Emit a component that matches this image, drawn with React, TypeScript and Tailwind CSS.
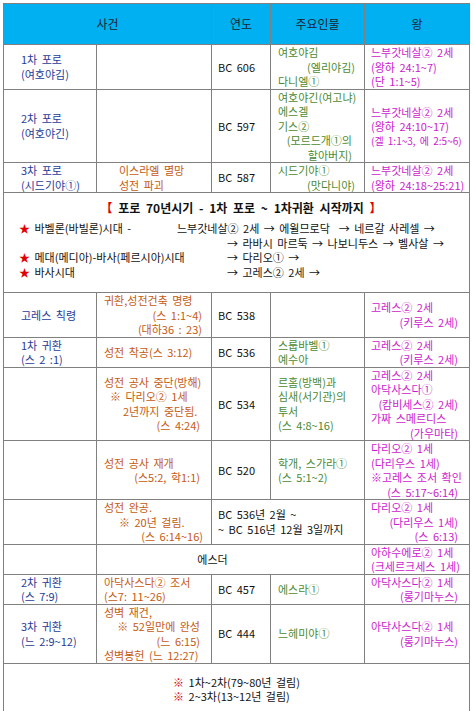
import React from "react";

const blue = "text-[#1f3c99]";
const orange = "text-[#c55a11]";
const green = "text-[#4b8a32]";
const pink = "text-[#cc1acc]";

function L({ children, className = "" }: { children: React.ReactNode; className?: string }) {
  return <div className={"text-left whitespace-nowrap " + className}>{children}</div>;
}

function R({ children, className = "" }: { children: React.ReactNode; className?: string }) {
  return <div className={"text-right whitespace-nowrap " + className}>{children}</div>;
}

const td = "border border-[#808080] align-middle p-0";

export default function App() {
  return (
    <div className="w-[474px] h-[711px] bg-white pt-[3px] pl-[3px] font-['Noto_Sans_CJK_KR',sans-serif] text-[11px] leading-[14.5px] [word-spacing:2px] text-[#111]">
      <table className="table-fixed border-collapse w-[466px]">
        <colgroup>
          <col className="w-[93px]" />
          <col className="w-[115px]" />
          <col className="w-[59px]" />
          <col className="w-[94px]" />
          <col className="w-[105px]" />
        </colgroup>
        <tbody>
          <tr className="h-[41px] bg-[#00b0f0] text-[12px] text-[#1a2433]">
            <td colSpan={2} className={td + " text-center"}>사건</td>
            <td className={td + " text-center"}>연도</td>
            <td className={td + " text-center"}>주요인물</td>
            <td className={td + " text-center"}>왕</td>
          </tr>

          <tr className="h-[44px]">
            <td className={td + " pl-[17px] " + blue}>
              <L>1차 포로</L>
              <L>(여호야김)</L>
            </td>
            <td className={td}></td>
            <td className={td + " pl-[6px]"}>BC 606</td>
            <td className={td + " pl-[7px] pr-[9px] " + green}>
              <L>여호야김</L>
              <R>(엘리야김)</R>
              <L>다니엘①</L>
            </td>
            <td className={td + " pl-[6px] " + pink}>
              <L>느부갓네살② 2세</L>
              <L>(왕하 24:1~7)</L>
              <L>(단 1:1~5)</L>
            </td>
          </tr>

          <tr className="h-[72px]">
            <td className={td + " pl-[17px] " + blue}>
              <L>2차 포로</L>
              <L>(여호야긴)</L>
            </td>
            <td className={td}></td>
            <td className={td + " pl-[6px]"}>BC 597</td>
            <td className={td + " pl-[7px] pr-[12px] " + green}>
              <L>여호야긴(여고냐)</L>
              <L>에스겔</L>
              <L>기스②</L>
              <R>(모르드개①의</R>
              <R>할아버지)</R>
            </td>
            <td className={td + " pl-[6px] " + pink}>
              <L>느부갓네살② 2세</L>
              <L>(왕하 24:10~17)</L>
              <L className="text-[10px] leading-[13px]">(겔 1:1~3, 에 2:5~6)</L>
            </td>
          </tr>

          <tr className="h-[29px]">
            <td className={td + " pl-[17px] " + blue}>
              <L>3차 포로</L>
              <L>(시드기야①)</L>
            </td>
            <td className={td + " pl-[22px] " + orange}>
              <L>이스라엘 멸망</L>
              <L>성전 파괴</L>
            </td>
            <td className={td + " pl-[6px]"}>BC 587</td>
            <td className={td + " pl-[7px] pr-[9px] " + green}>
              <L>시드기야①</L>
              <R>(맛다니야)</R>
            </td>
            <td className={td + " pl-[6px] " + pink}>
              <L>느부갓네살② 2세</L>
              <L>(왕하 24:18~25:21)</L>
            </td>
          </tr>

          <tr className="h-[100px]">
            <td colSpan={5} className={td + " pl-[15px] pb-[6px]"}>
              <div className="text-center font-bold text-[12px] leading-[16px] mb-[5px] pr-[6px] [word-spacing:3px]">
                <span className="text-[#e00000]">【</span> 포로 70년시기 - 1차 포로 ~ 1차귀환 시작까지 <span className="text-[#e00000]">】</span>
              </div>
              <div className="flex">
                <span className="w-[158px] whitespace-nowrap">
                  <span className="text-[#e00000]">★</span> 바벨론(바빌론)시대 -
                </span>
                <span className="whitespace-nowrap">느부갓네살② 2세 → 에윌므로닥 &nbsp;→ 네르갈 사레셀 →</span>
              </div>
              <div className="flex">
                <span className="w-[208px]"></span>
                <span className="whitespace-nowrap">→ 라바시 마르둑 → 나보니두스 → 벨사살 →</span>
              </div>
              <div className="flex">
                <span className="w-[208px] whitespace-nowrap">
                  <span className="text-[#e00000]">★</span> 메대(메디아)-바사(페르시아)시대
                </span>
                <span className="whitespace-nowrap">→ 다리오① →</span>
              </div>
              <div className="flex">
                <span className="w-[208px] whitespace-nowrap">
                  <span className="text-[#e00000]">★</span> 바사시대
                </span>
                <span className="whitespace-nowrap">→ 고레스② 2세 →</span>
              </div>
            </td>
          </tr>

          <tr className="h-[44px]">
            <td className={td + " pl-[17px] " + blue}>
              <L>고레스 칙령</L>
            </td>
            <td className={td + " pl-[7px] pr-[9px] " + orange}>
              <L>귀환,성전건축 명령</L>
              <R>(스 1:1~4)</R>
              <R>(대하36 : 23)</R>
            </td>
            <td className={td + " pl-[6px]"}>BC 538</td>
            <td className={td}></td>
            <td className={td + " pl-[6px] pr-[11px] " + pink}>
              <L>고레스② 2세</L>
              <R>(키루스 2세)</R>
            </td>
          </tr>

          <tr className="h-[30px]">
            <td className={td + " pl-[17px] " + blue}>
              <L>1차 귀환</L>
              <L>(스 2 :1)</L>
            </td>
            <td className={td + " pl-[7px] " + orange}>
              <L>성전 착공(스 3:12)</L>
            </td>
            <td className={td + " pl-[6px]"}>BC 536</td>
            <td className={td + " pl-[7px] " + green}>
              <L>스룹바벨①</L>
              <L>예수아</L>
            </td>
            <td className={td + " pl-[6px] pr-[11px] " + pink}>
              <L>고레스② 2세</L>
              <R>(키루스 2세)</R>
            </td>
          </tr>

          <tr className="h-[73px]">
            <td className={td}></td>
            <td className={td + " pl-[7px] pr-[11px] " + orange}>
              <L>성전 공사 중단(방해)</L>
              <L className="pl-[6px]">※ 다리오② 1세</L>
              <L className="pl-[19px]">2년까지 중단됨.</L>
              <R>(스 4:24)</R>
            </td>
            <td className={td + " pl-[6px]"}>BC 534</td>
            <td className={td + " pl-[7px] " + green}>
              <L>르홈(방백)과</L>
              <L>심새(서기관)의</L>
              <L>투서</L>
              <L>(스 4:8~16)</L>
            </td>
            <td className={td + " pl-[6px] pr-[11px] " + pink}>
              <L>고레스② 2세</L>
              <L>아닥사스다①</L>
              <R>(캄비세스② 2세)</R>
              <L>가짜 스메르디스</L>
              <R>(가우마타)</R>
            </td>
          </tr>

          <tr className="h-[57px]">
            <td className={td}></td>
            <td className={td + " pl-[7px] pr-[11px] " + orange}>
              <L>성전 공사 재개</L>
              <R>(스5:2, 학1:1)</R>
            </td>
            <td className={td + " pl-[6px]"}>BC 520</td>
            <td className={td + " pl-[7px] " + green}>
              <L>학개, 스가라①</L>
              <L>(스 5:1~2)</L>
            </td>
            <td className={td + " pl-[6px] pr-[11px] " + pink}>
              <L>다리오② 1세</L>
              <L>(다리우스 1세)</L>
              <L>※고레스 조서 확인</L>
              <R>(스 5:17~6:14)</R>
            </td>
          </tr>

          <tr className="h-[44px]">
            <td className={td}></td>
            <td className={td + " pl-[7px] pr-[8px] " + orange}>
              <L>성전 완공.</L>
              <L className="pl-[15px]">※ 20년 걸림.</L>
              <R>(스 6:14~16)</R>
            </td>
            <td colSpan={2} className={td + " pl-[6px]"}>
              <L>BC 536년 2월 ~</L>
              <L>~ BC 516년 12월 3일까지</L>
            </td>
            <td className={td + " pl-[6px] pr-[11px] " + pink}>
              <L>다리오② 1세</L>
              <R>(다리우스 1세)</R>
              <R>(스 6:13)</R>
            </td>
          </tr>

          <tr className="h-[30px]">
            <td className={td}></td>
            <td colSpan={3} className={td + " text-center pr-[36px]"}>에스더</td>
            <td className={td + " pl-[6px] " + pink}>
              <L>아하수에로② 1세</L>
              <L>(크세르크세스 1세)</L>
            </td>
          </tr>

          <tr className="h-[30px]">
            <td className={td + " pl-[17px] " + blue}>
              <L>2차 귀환</L>
              <L>(스 7:9)</L>
            </td>
            <td className={td + " pl-[7px] " + orange}>
              <L>아닥사스다② 조서</L>
              <L>(스7: 11~26)</L>
            </td>
            <td className={td + " pl-[6px]"}>BC 457</td>
            <td className={td + " pl-[7px] " + green}>
              <L>에스라①</L>
            </td>
            <td className={td + " pl-[6px] pr-[11px] " + pink}>
              <L>아닥사스다② 1세</L>
              <R>(롱기마누스)</R>
            </td>
          </tr>

          <tr className="h-[57px]">
            <td className={td + " pl-[17px] " + blue}>
              <L>3차 귀환</L>
              <L>(느 2:9~12)</L>
            </td>
            <td className={td + " pl-[7px] pr-[11px] " + orange}>
              <L>성벽 재건,</L>
              <R>※ 52일만에 완성</R>
              <R>(느 6:15)</R>
              <L>성벽봉헌 (느 12:27)</L>
            </td>
            <td className={td + " pl-[6px]"}>BC 444</td>
            <td className={td + " pl-[7px] " + green}>
              <L>느헤미야①</L>
            </td>
            <td className={td + " pl-[6px] pr-[11px] " + pink}>
              <L>아닥사스다② 1세</L>
              <R>(롱기마누스)</R>
            </td>
          </tr>

          <tr className="h-[52px]">
            <td colSpan={5} className={td + " text-center"}>
              <div className="inline-block text-left">
                <div>
                  <span className="text-[#e00000]">※</span> 1차~2차(79~80년 걸림)
                </div>
                <div>
                  <span className="text-[#e00000]">※</span> 2~3차(13~12년 걸림)
                </div>
              </div>
            </td>
          </tr>
        </tbody>
      </table>
    </div>
  );
}
